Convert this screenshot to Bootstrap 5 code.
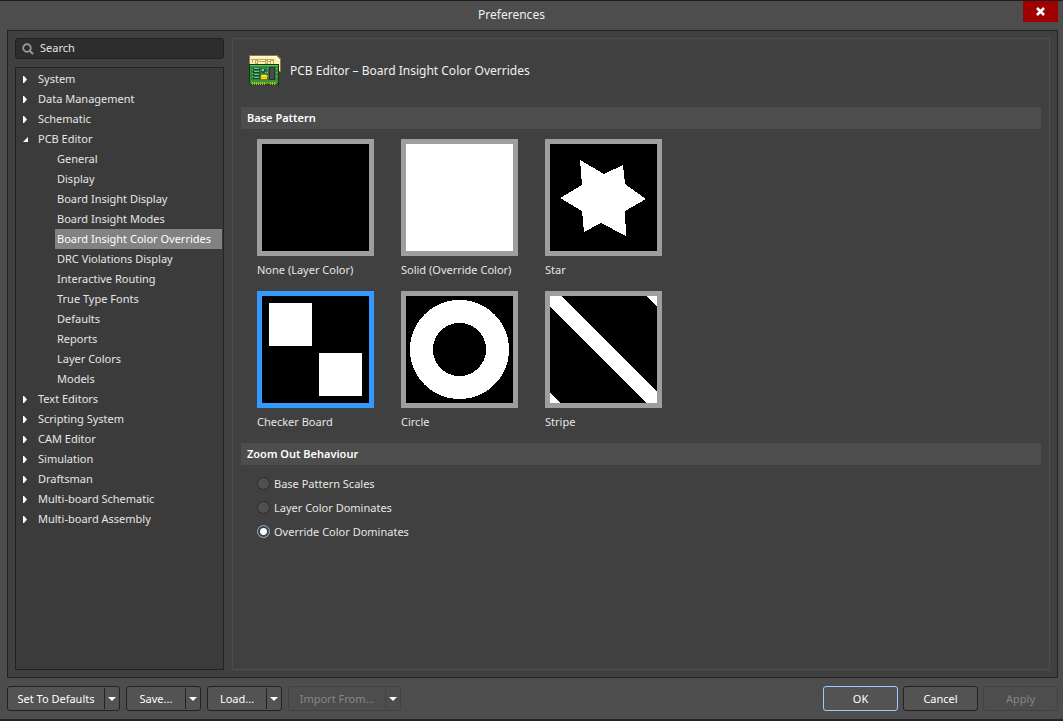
<!DOCTYPE html>
<html lang="en">
<head>
<meta charset="utf-8">
<meta name="viewport" content="width=device-width, initial-scale=1">
<title>Preferences</title>
<link href="https://cdn.jsdelivr.net/npm/bootstrap@5.3.0/dist/css/bootstrap.min.css" rel="stylesheet">
<style>
  body { background: #4d4d4d; color: #e6e6e6; font: 11px/20px "Noto Sans", "Open Sans", sans-serif; }
  button, input { font: inherit; }
  .window { border-top: 1px solid #1e1e1e; border-bottom: 2px solid #262424; padding: 0 5px 8px 7px; }
  .titlebar { height: 29px; padding-right: 42px; }
  .titlebar h1 { font-size: 12px; line-height: 28px; margin: 0; color: #f0f0f0; }
  .close-btn { top: 0; right: 0; width: 35px; height: 21px; background: #a00000; border: 0; padding: 0; display: flex; align-items: center; justify-content: center; }
  .frame { background: #404040; border: 1px solid #222; padding: 7px; gap: 8px; }
  .side { width: 209px; gap: 8px; }
  .search-box { height: 21px; background: #2d2d2d; border: 1px solid #212121; border-radius: 3px; padding: 0 6px; gap: 6px; }
  .search-box input { background: transparent; border: 0; outline: 0; padding: 0 0 2px; min-width: 0; line-height: 17px; color: #e6e6e6; }
  .search-box input::placeholder { color: #e6e6e6; opacity: 1; }
  .tree { background: #3b3b3b; border: 1px solid #222; padding: 1px; }
  .tree ul { list-style: none; margin: 0; padding: 0; }
  .tree a { display: flex; align-items: center; height: 20px; color: #e6e6e6; text-decoration: none; white-space: nowrap; }
  .tree svg { width: 6px; height: 7px; margin: 0 10px 0 5px; fill: #fff; }
  .tree ul ul { padding-left: 38px; }
  .tree ul ul a { padding-left: 2px; }
  .tree a.active { background: #828282; color: #fff; }
  .content-pane { border: 1px solid #4e4e4e; padding: 0 8px; }
  .page-head { height: 68px; padding: 0 8px 4px; gap: 8px; }
  .page-head h2 { font-size: 12px; line-height: 20px; margin: 0; color: #f0f0f0; }
  .section-head { font-size: 11px; font-weight: 600; line-height: 22px; height: 22px; margin: 0; padding: 0 6px; background: #4d4d4d; color: #fff; }
  .tiles { display: grid; grid-template-columns: repeat(3, 117px); column-gap: 27px; padding: 10px 16px 0; }
  .tile { display: block; height: 152px; line-height: 14px; white-space: nowrap; }
  .tile svg { display: block; width: 117px; height: 117px; border: 5px solid #9e9e9e; background: #000; fill: #fff; margin-bottom: 7px; }
  .btn-check:checked + .tile svg { border-color: #3399ff; }
  .pattern-section { height: 336px; }
  .choices { padding: 7px 16px; }
  .choice { height: 24px; gap: 4px; }
  .choice input { appearance: none; width: 13px; height: 13px; margin: 0 0 1px; border: 1px solid #2b2b2b; border-radius: 50%; background: #505050; }
  .choice input:checked { border-color: #8ab4dc; background: radial-gradient(circle, #fff 3px, #454545 4px); }
  .actions { padding-top: 8px; gap: 6px; }
  .confirm { gap: 5px; }
  .dlg-btn { height: 25px; width: 75px; padding: 0; color: #fff; background: #535353; border: 1px solid #222; border-radius: 3px; font-size: 11px; line-height: 23px; }
  .dlg-btn:hover { background: #5c5c5c; color: #fff; border-color: #222; }
  .dlg-btn.ok { border-color: #99ccff; }
  .dlg-btn:disabled { color: #868686; background: #4d4d4d; border-color: #424242; opacity: 1; }
  .split { width: 75px; height: 25px; background: #535353; border: 1px solid #222; border-radius: 3px; }
  .split.wide { width: 113px; }
  .split button { background: none; border: 0; padding: 0; color: #fff; line-height: 23px; }
  .split button + button { width: 15px; height: 21px; border-left: 1px solid #222; display: flex; align-items: center; justify-content: center; }
  .split svg { width: 8px; height: 4px; fill: #fff; }
  .split.off { background: #4d4d4d; border-color: #424242; }
  .split.off button { color: #868686; border-color: #424242; }
</style>
</head>
<body>
<div class="window min-vh-100 d-flex flex-column">
  <header class="titlebar position-relative text-center">
    <h1 class="fw-normal">Preferences</h1>
    <button type="button" class="close-btn position-absolute" aria-label="Close">
      <svg width="9" height="9" viewBox="0 0 9 9"><path d="M1 1l7 7M8 1L1 8" stroke="#fff" stroke-width="2.600" fill="none"/></svg>
    </button>
  </header>

  <main class="frame flex-grow-1 d-flex">
    <aside class="side d-flex flex-column flex-shrink-0">
      <div class="search-box d-flex align-items-center">
        <svg width="12" height="12" viewBox="0 0 12 12" fill="none" stroke="#9c9c9c"><circle cx="5" cy="5" r="3.800" stroke-width="1.700"/><path d="M8 8l3 3" stroke-width="2"/></svg>
        <input type="search" class="flex-grow-1" placeholder="Search" aria-label="Search">
      </div>
      <nav class="tree flex-grow-1" aria-label="Preference pages">
        <ul>
          <li><a href="#"><svg viewBox="0 0 6 7"><path d="M1 0h1l3 3.500-3 3.500H1z"/></svg>System</a></li>
          <li><a href="#"><svg viewBox="0 0 6 7"><path d="M1 0h1l3 3.500-3 3.500H1z"/></svg>Data Management</a></li>
          <li><a href="#"><svg viewBox="0 0 6 7"><path d="M1 0h1l3 3.500-3 3.500H1z"/></svg>Schematic</a></li>
          <li><a href="#"><svg viewBox="0 0 6 7"><path d="M6 1v5H1z"/></svg>PCB Editor</a>
            <ul>
              <li><a href="#">General</a></li>
              <li><a href="#">Display</a></li>
              <li><a href="#">Board Insight Display</a></li>
              <li><a href="#">Board Insight Modes</a></li>
              <li><a href="#" class="active" aria-current="page">Board Insight Color Overrides</a></li>
              <li><a href="#">DRC Violations Display</a></li>
              <li><a href="#">Interactive Routing</a></li>
              <li><a href="#">True Type Fonts</a></li>
              <li><a href="#">Defaults</a></li>
              <li><a href="#">Reports</a></li>
              <li><a href="#">Layer Colors</a></li>
              <li><a href="#">Models</a></li>
            </ul>
          </li>
          <li><a href="#"><svg viewBox="0 0 6 7"><path d="M1 0h1l3 3.500-3 3.500H1z"/></svg>Text Editors</a></li>
          <li><a href="#"><svg viewBox="0 0 6 7"><path d="M1 0h1l3 3.500-3 3.500H1z"/></svg>Scripting System</a></li>
          <li><a href="#"><svg viewBox="0 0 6 7"><path d="M1 0h1l3 3.500-3 3.500H1z"/></svg>CAM Editor</a></li>
          <li><a href="#"><svg viewBox="0 0 6 7"><path d="M1 0h1l3 3.500-3 3.500H1z"/></svg>Simulation</a></li>
          <li><a href="#"><svg viewBox="0 0 6 7"><path d="M1 0h1l3 3.500-3 3.500H1z"/></svg>Draftsman</a></li>
          <li><a href="#"><svg viewBox="0 0 6 7"><path d="M1 0h1l3 3.500-3 3.500H1z"/></svg>Multi-board Schematic</a></li>
          <li><a href="#"><svg viewBox="0 0 6 7"><path d="M1 0h1l3 3.500-3 3.500H1z"/></svg>Multi-board Assembly</a></li>
        </ul>
      </nav>
    </aside>

    <section class="content-pane flex-grow-1">
      <div class="page-head d-flex align-items-center">
        <svg width="33" height="32" viewBox="0 0 33 32" shape-rendering="crispEdges" aria-hidden="true">
          <path d="M0 0h28l4 4v13H0z" fill="#8c7a3c"/>
          <path d="M1 1h26l4 4v11H1z" fill="#fff0b4"/>
          <path d="M1 1h7v1H1zM9 1h9v1H9zM19 1h8v1h-8z" fill="#fffbe8"/>
          <path d="M27 1l4 4h-4z" fill="#fff"/>
          <path d="M2 4h23M8 6.500h8M18 6.500h3M21 9V5.500h3V9M3 5v3" stroke="#bda865" fill="none"/>
          <path d="M6 5h2v3H6zM16 5h2v3h-2z" stroke="#bda865" fill="none"/>
          <path d="M0 9h30v22h-1v-2h-3v1h-7v-1h-2v1H2v-2H0z" fill="#053f0b"/>
          <path d="M1 10h28v18H1z" fill="#349538"/>
          <path d="M1 10h28v1H1z" fill="#61b65b"/>
          <path d="M2 12h26v13H2z" fill="#2d8034"/>
          <path d="M2 27h26v2H2z" fill="#6f981f"/>
          <path d="M3 27v3M5 27v3M7 27v3M9 27v3M11 27v3M13 27v3M15 27v3M21 27v3M23 27v3M25 27v3" stroke="#a9b62f"/>
          <path d="M4 13.500h7M4 16.500h7M4 19.500h7M4 22.500h7" stroke="#0f4a30" stroke-width="2"/>
          <path d="M5 13.500h5M5 16.500h5M5 19.500h5M5 22.500h5" stroke="#78b8a6"/>
          <path d="M3 14h1v1H3zM3 18h1v1H3zM3 21h1v1H3zM18 13h1v1h-1zM18 17h1v1h-1zM18 21h1v1h-1zM27 13h1v1h-1zM27 17h1v1h-1zM27 21h1v1h-1z" fill="#8fbf9b"/>
          <path d="M13 14h4v4h-4z" fill="#0d5c5a"/><path d="M13 14h2v2h-2zM16 17h1v1h-1z" fill="#78c8be"/>
          <path d="M12 19h6v6h-6z" fill="#9c7200"/><path d="M12 20h6v4h-6z" fill="#f4cf08"/><path d="M13 20h4v1h-4z" fill="#fff05c"/>
          <path d="M20 12h6v13h-6z" fill="#303034"/><path d="M21 13h4v11h-4z" fill="#4a4a50"/>
        </svg>
        <h2 class="fw-normal">PCB Editor – Board Insight Color Overrides</h2>
      </div>

      <div class="pattern-section">
        <h3 class="section-head">Base Pattern</h3>
        <div class="tiles">
          <div><input class="btn-check" type="radio" name="pattern" id="p-none">
            <label class="tile" for="p-none"><svg viewBox="0 0 107 107"></svg>None (Layer Color)</label></div>
          <div><input class="btn-check" type="radio" name="pattern" id="p-solid">
            <label class="tile" for="p-solid"><svg viewBox="0 0 107 107"><path d="M0 0h107v107H0z"/></svg>Solid (Override Color)</label></div>
          <div><input class="btn-check" type="radio" name="pattern" id="p-star">
            <label class="tile" for="p-star"><svg viewBox="0 0 107 107" shape-rendering="crispEdges"><path d="M30 16l24 14 19-9 2 19 21 15-21 12 1 25-25-13-17 9-2-21-22-13 22-13z"/></svg>Star</label></div>
          <div><input class="btn-check" type="radio" name="pattern" id="p-check" checked>
            <label class="tile" for="p-check"><svg viewBox="0 0 107 107"><path d="M7 7h43v43H7zM57 57h43v43H57z"/></svg>Checker Board</label></div>
          <div><input class="btn-check" type="radio" name="pattern" id="p-circle">
            <label class="tile" for="p-circle"><svg viewBox="0 0 107 107" shape-rendering="crispEdges"><circle cx="53.500" cy="53.500" r="38" fill="none" stroke="#fff" stroke-width="23"/></svg>Circle</label></div>
          <div><input class="btn-check" type="radio" name="pattern" id="p-stripe">
            <label class="tile" for="p-stripe"><svg viewBox="0 0 107 107" shape-rendering="crispEdges"><path d="M0 0h11l96 96v11H96L0 11zM97 0h10v11zM0 97l11 10H0z"/></svg>Stripe</label></div>
        </div>
      </div>

      <div>
        <h3 class="section-head">Zoom Out Behaviour</h3>
        <div class="choices">
          <div class="choice d-flex align-items-center"><input type="radio" name="zoom" id="z-base"><label for="z-base">Base Pattern Scales</label></div>
          <div class="choice d-flex align-items-center"><input type="radio" name="zoom" id="z-layer"><label for="z-layer">Layer Color Dominates</label></div>
          <div class="choice d-flex align-items-center"><input type="radio" name="zoom" id="z-over" checked><label for="z-over">Override Color Dominates</label></div>
        </div>
      </div>
    </section>
  </main>

  <footer class="actions d-flex">
    <div class="split wide d-flex align-items-center"><button type="button" class="flex-grow-1">Set To Defaults</button><button type="button" aria-label="More default options"><svg viewBox="0 0 8 4"><path d="M0 0h8L4 4z"/></svg></button></div>
    <div class="split d-flex align-items-center"><button type="button" class="flex-grow-1">Save...</button><button type="button" aria-label="More save options"><svg viewBox="0 0 8 4"><path d="M0 0h8L4 4z"/></svg></button></div>
    <div class="split d-flex align-items-center"><button type="button" class="flex-grow-1">Load...</button><button type="button" aria-label="More load options"><svg viewBox="0 0 8 4"><path d="M0 0h8L4 4z"/></svg></button></div>
    <div class="split wide off d-flex align-items-center"><button type="button" class="flex-grow-1" disabled>Import From...</button><button type="button" disabled aria-label="More import options"><svg viewBox="0 0 8 4"><path d="M0 0h8L4 4z"/></svg></button></div>
    <div class="confirm d-flex ms-auto">
      <button type="button" class="btn dlg-btn ok">OK</button>
      <button type="button" class="btn dlg-btn">Cancel</button>
      <button type="button" class="btn dlg-btn" disabled>Apply</button>
    </div>
  </footer>
</div>
<script src="https://cdn.jsdelivr.net/npm/bootstrap@5.3.0/dist/js/bootstrap.bundle.min.js"></script>
</body>
</html>
